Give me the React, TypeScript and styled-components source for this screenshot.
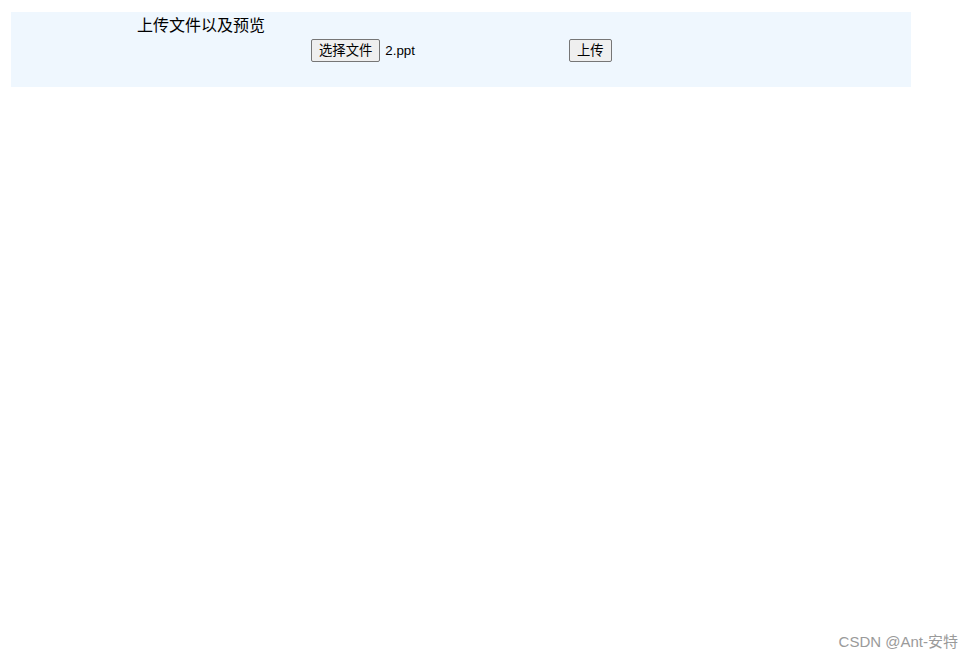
import styled, { createGlobalStyle } from 'styled-components'

const GlobalStyle = createGlobalStyle`
  html, body {
    margin: 0;
    padding: 0;
    background: #ffffff;
    font-family: "Liberation Sans", "Noto Sans CJK SC", Arial, sans-serif;
  }
`

const Page = styled.div`
  width: 973px;
  height: 659px;
  position: relative;
  padding: 12px 0 0 11px;
  box-sizing: border-box;
`

const UploadPanel = styled.div`
  width: 900px;
  height: 75px;
  background: #eff7fe;
  box-sizing: border-box;
  padding-top: 4px;
  display: flex;
  flex-direction: column;
`

const Title = styled.div`
  margin-left: 126px;
  font-size: 16px;
  line-height: 20px;
  color: #000;
`

const FormRow = styled.div`
  margin-left: 300px;
  margin-top: 3px;
  display: flex;
  align-items: center;
`

const FilePicker = styled.div`
  width: 258px;
  display: flex;
  align-items: center;
  gap: 5px;
`

const NativeButton = styled.button`
  height: 23px;
  padding: 0 7px;
  background: #efefef;
  border: 1px solid #767676;
  border-radius: 2px;
  font-family: "Liberation Sans", "Noto Sans CJK SC", Arial, sans-serif;
  font-size: 13.33px;
  color: #000;
  line-height: 21px;
`

const FileName = styled.span`
  font-size: 13.33px;
  color: #000;
`

const Watermark = styled.div`
  position: absolute;
  right: 15px;
  bottom: 8px;
  font-size: 15px;
  color: #9a9a9a;
`

export default function App() {
  return (
    <>
      <GlobalStyle />
      <Page>
        <UploadPanel>
          <Title>上传文件以及预览</Title>
          <FormRow>
            <FilePicker>
              <NativeButton>选择文件</NativeButton>
              <FileName>2.ppt</FileName>
            </FilePicker>
            <NativeButton>上传</NativeButton>
          </FormRow>
        </UploadPanel>
        <Watermark>CSDN @Ant-安特</Watermark>
      </Page>
    </>
  )
}
